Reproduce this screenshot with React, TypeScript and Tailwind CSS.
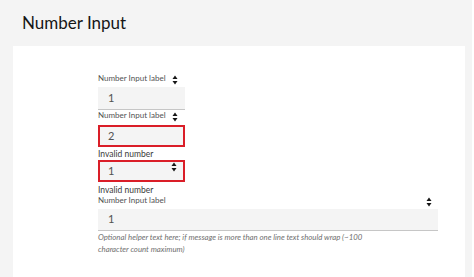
import React from "react"

const font = { fontFamily: 'Lato, "Liberation Sans", sans-serif' }

function Stepper() {
  return (
    <svg width="6" height="10" viewBox="0 0 6 10" className="block">
      <path d="M3 0.5 L5.5 4 L0.5 4 Z" fill="#161616" />
      <path d="M3 9.5 L5.5 6 L0.5 6 Z" fill="#161616" />
    </svg>
  )
}

function LabelRow({ text, wide }: { text: string; wide?: boolean }) {
  return (
    <div className={`flex items-center justify-between h-[10px] ${wide ? "w-[334px]" : "w-[80px]"}`}>
      <span className="whitespace-nowrap text-[8px] leading-[10px] text-[#525252]">{text}</span>
      <span className="mt-[3px]">
        <Stepper />
      </span>
    </div>
  )
}

export default function App() {
  return (
    <div className="w-[474px] h-[277px] overflow-hidden bg-white" style={font}>
      <div className="mr-[2px] h-full bg-[#f4f4f4] pl-[13px] flex flex-col">
        <h1 className="h-[46px] shrink-0 pl-[9px] pt-[11px] text-[17px] leading-[24px] text-[#161616]">Number Input</h1>
        <div className="flex-1 bg-white mr-[7px] pl-[85px] pt-[27px]">
          {/* field 1 */}
          <LabelRow text="Number Input label" />
          <div className="mt-[4px] w-[87px] h-[23px] bg-[#f4f4f4] border-b border-[#c6c6c6] flex items-center pl-[10px] text-[11px] text-[#525252]">1</div>
          {/* field 2 */}
          <LabelRow text="Number Input label" />
          <div className="mt-[5px] w-[87px] h-[22px] bg-[#f4f4f4] border-2 border-[#da1e28] flex items-center pl-[8px] text-[11px] text-[#525252]">2</div>
          <div className="mt-[2px] text-[8.5px] leading-[10px] text-[#393939]">Invalid number</div>
          {/* field 3 */}
          <div className="mt-[1px] w-[87px] h-[22px] bg-[#f4f4f4] border-2 border-[#da1e28] flex items-center justify-between pl-[8px] pr-[6px] text-[11px] text-[#525252]">
            <span>1</span>
            <span className="-mt-[8px]">
              <Stepper />
            </span>
          </div>
          <div className="mt-[3px] text-[8.5px] leading-[10px] text-[#393939]">Invalid number</div>
          {/* field 4 */}
          <LabelRow text="Number Input label" wide />
          <div className="mt-[4px] w-[340px] h-[22px] bg-[#f4f4f4] border-b border-[#c6c6c6] flex items-center pl-[10px] text-[11px] text-[#525252]">1</div>
          <p className="w-[266px] text-[7.8px] leading-[12px] italic text-[#6f6f6f]">
            Optional helper text here; if message is more than one line text should wrap (~100 character count maximum)
          </p>
        </div>
      </div>
    </div>
  )
}
